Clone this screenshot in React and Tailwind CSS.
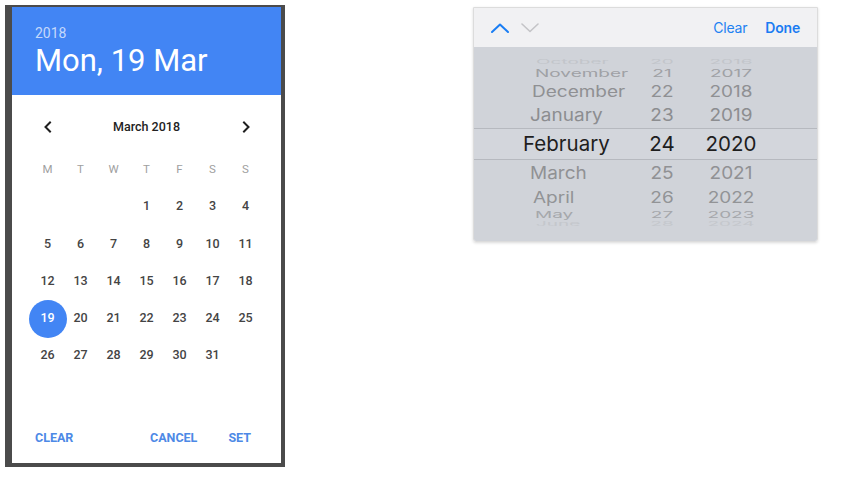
import React from 'react';

const WEEKDAYS = ['M', 'T', 'W', 'T', 'F', 'S', 'S'];
const WEEKS = [
  [null, null, null, 1, 2, 3, 4],
  [5, 6, 7, 8, 9, 10, 11],
  [12, 13, 14, 15, 16, 17, 18],
  [19, 20, 21, 22, 23, 24, 25],
  [26, 27, 28, 29, 30, 31, null],
];

const Chevron = ({ dir }) => (
  <svg width="10" height="12" viewBox="0 0 10 12" fill="none">
    <path
      d={dir === 'left' ? 'M7 1.5 L2.5 6 L7 10.5' : 'M3 1.5 L7.5 6 L3 10.5'}
      stroke="#1f1f1f"
      strokeWidth="2"
      strokeLinecap="square"
    />
  </svg>
);

const MaterialPicker = () => (
  <div className="bg-[#4b4b4b] pl-[7px] pt-[2px] pr-[4px] pb-[4px] w-[280px] h-[462px]">
    <div className="bg-white w-full h-full flex flex-col" style={{ fontFamily: 'Roboto, "Liberation Sans", sans-serif' }}>
      <div className="h-[88px] bg-[#4285f4] px-[23px] pt-[18px]">
        <div className="text-[14px] leading-[16px] text-white/70">2018</div>
        <div className="text-[31px] leading-[36px] mt-[2px] text-white">Mon, 19 Mar</div>
      </div>

      <div className="pl-[19px] pt-[12px]">
        <div className="flex items-center h-[40px] w-[231px]">
          <div className="w-[33px] flex justify-center"><Chevron dir="left" /></div>
          <div className="flex-1 text-center text-[12.5px] font-medium text-[#222]">March 2018</div>
          <div className="w-[33px] flex justify-center"><Chevron dir="right" /></div>
        </div>

        <div className="grid grid-cols-[repeat(7,33px)] mt-[5px] h-[36px] items-center">
          {WEEKDAYS.map((d, i) => (
            <div key={i} className="text-center text-[11.5px] text-[#a0a0a0]">{d}</div>
          ))}
        </div>

        {WEEKS.map((week, wi) => (
          <div key={wi} className="grid grid-cols-[repeat(7,33px)] h-[37.25px] items-center">
            {week.map((day, di) => (
              <div key={di} className="flex justify-center">
                {day === 19 ? (
                  <div className="w-[38px] h-[38px] shrink-0 rounded-full bg-[#4285f4] flex items-center justify-center text-[12.5px] font-medium text-white">19</div>
                ) : (
                  <span className="text-[12.5px] font-medium text-[#444]">{day || ''}</span>
                )}
              </div>
            ))}
          </div>
        ))}
      </div>

      <div className="mt-auto pb-[15px] pl-[23px] pr-[30px] flex items-center h-[35px] text-[12.5px] font-bold text-[#4d89e6]">
        <span>CLEAR</span>
        <span className="flex-1" />
        <span>CANCEL</span>
        <span className="ml-[31px]">SET</span>
      </div>
    </div>
  </div>
);

const ROWS = [
  { m: 'October', d: '20', y: '2016', h: 10, s: 0.3, c: 'text-[#c2c5ca]', pl: 13 },
  { m: 'November', d: '21', y: '2017', h: 13, s: 0.55, c: 'text-[#9fa1a5]', pl: 12 },
  { m: 'December', d: '22', y: '2018', h: 23, s: 0.8, c: 'text-[#8f9093]', pl: 9 },
  { m: 'January', d: '23', y: '2019', h: 25, s: 0.9, c: 'text-[#8c8d90]', pl: 7 },
  { sel: true, m: 'February', d: '24', y: '2020', h: 32 },
  { m: 'March', d: '25', y: '2021', h: 26, s: 0.92, c: 'text-[#909194]', pl: 7 },
  { m: 'April', d: '26', y: '2022', h: 22, s: 0.8, c: 'text-[#929396]', pl: 10 },
  { m: 'May', d: '27', y: '2023', h: 12, s: 0.5, c: 'text-[#a5a7ab]', pl: 12 },
  { m: 'June', d: '28', y: '2024', h: 9, s: 0.3, c: 'text-[#c4c7cc]', pl: 13 },
];

const IosPicker = () => (
  <div
    className="w-[345px] h-[235px] border border-[#dcdcdc] rounded-b-[3px] overflow-hidden shadow-[0_1px_3px_rgba(0,0,0,0.15)] flex flex-col"
    style={{ fontFamily: 'Inter, "Liberation Sans", sans-serif' }}
  >
    <div className="h-[39px] bg-[#f1f1f3] flex items-center pl-[17px] pr-[17px]">
      <svg width="18" height="10" viewBox="0 0 18 10" fill="none">
        <path d="M1 9 L9 1.5 L17 9" stroke="#1a7ef4" strokeWidth="2" strokeLinecap="round" strokeLinejoin="round" />
      </svg>
      <svg width="18" height="10" viewBox="0 0 18 10" fill="none" className="ml-[12px]">
        <path d="M1 1 L9 8.5 L17 1" stroke="#c4c4c7" strokeWidth="1.6" strokeLinecap="round" strokeLinejoin="round" />
      </svg>
      <span className="flex-1" />
      <span className="text-[14px] text-[#2181f2] tracking-[-0.2px]">Clear</span>
      <span className="ml-[18px] text-[14px] font-semibold text-[#1a7cf2] tracking-[-0.2px]">Done</span>
    </div>

    <div className="flex-1 bg-[#d0d3d9] pt-[10px]">
      {ROWS.map((r) =>
        r.sel ? (
          <div
            key={r.m}
            style={{ height: r.h }}
            className="flex items-center border-y border-[#b6b9bf] bg-[#d3d6dc] text-[#1e1e1e] text-[20.5px] leading-none"
          >
            <div className="w-[150px] pl-[49px]">{r.m}</div>
            <div className="w-[76px] text-center">{r.d}</div>
            <div className="w-[62px] text-center">{r.y}</div>
          </div>
        ) : (
          <div key={r.m} style={{ height: r.h }} className={`flex items-center overflow-visible text-[19px] leading-none ${r.c}`}>
            <div className="w-[150px]" style={{ paddingLeft: 49 + r.pl }}>
              <span className="inline-block" style={{ transform: `scaleY(${r.s})` }}>{r.m}</span>
            </div>
            <div className="w-[76px] text-center">
              <span className="inline-block" style={{ transform: `scaleY(${r.s})` }}>{r.d}</span>
            </div>
            <div className="w-[62px] text-center">
              <span className="inline-block" style={{ transform: `scaleY(${r.s})` }}>{r.y}</span>
            </div>
          </div>
        )
      )}
    </div>
  </div>
);

export default function App() {
  return (
    <div className="w-[850px] h-[484px] bg-white flex items-start pl-[5px] pt-[5px]">
      <MaterialPicker />
      <div className="ml-[188px] mt-[2px]">
        <IosPicker />
      </div>
    </div>
  );
}
